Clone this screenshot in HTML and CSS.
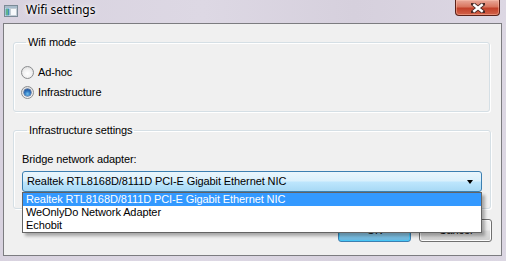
FILE: index.html
```html
<!DOCTYPE html>
<html>
<head>
<meta charset="utf-8">
<link rel="stylesheet" href="styles.css">
</head>
<body>
<div class="window">
  <div class="titlebar">
    <svg class="app-icon" width="14" height="12" viewBox="0 0 14 12">
      <rect x="0.5" y="0.5" width="13" height="11" fill="#e9eef2" stroke="#7b8a96"/>
      <rect x="1" y="1" width="12" height="2" fill="#a9bccb"/>
      <rect x="1.5" y="3.5" width="4" height="7" fill="#3f8fb8"/>
      <rect x="2" y="4" width="2" height="6" fill="#5fb48c"/>
      <rect x="6.5" y="3.5" width="6" height="7" fill="#f7f9fb" stroke="#c3cdd5"/>
    </svg>
    <span class="title">Wifi settings</span>
    <div class="close-btn">
      <svg width="14" height="10" viewBox="0 0 14 10">
        <path d="M2 1 L12 9 M12 1 L2 9" stroke="#4a2a26" stroke-width="4.2" stroke-linecap="square"/>
        <path d="M2.3 1.3 L11.7 8.7 M11.7 1.3 L2.3 8.7" stroke="#ffffff" stroke-width="2.4"/>
      </svg>
    </div>
  </div>
  <div class="client">
    <fieldset class="group group-mode">
      <legend>Wifi mode</legend>
      <div class="radio-row"><span class="radio"></span><span>Ad-hoc</span></div>
      <div class="radio-row"><span class="radio checked"></span><span>Infrastructure</span></div>
    </fieldset>
    <fieldset class="group group-infra">
      <legend>Infrastructure settings</legend>
      <div class="label">Bridge network adapter:</div>
      <div class="combo-wrap">
        <div class="combo">
          <span class="combo-text">Realtek RTL8168D/8111D PCI-E Gigabit Ethernet NIC</span>
          <span class="arrow"></span>
        </div>
        <div class="dropdown">
          <div class="item selected">Realtek RTL8168D/8111D PCI-E Gigabit Ethernet NIC</div>
          <div class="item">WeOnlyDo Network Adapter</div>
          <div class="item">Echobit</div>
        </div>
      </div>
    </fieldset>
    <div class="buttons">
      <div class="btn btn-default">OK</div>
      <div class="btn">Cancel</div>
    </div>
  </div>
</div>
</body>
</html>
```
FILE: styles.css
```css
html, body {
  margin: 0;
  padding: 0;
}
body {
  width: 506px;
  height: 261px;
  overflow: hidden;
  background: linear-gradient(90deg, #d8d2df 0%, #ddd8e4 40%, #d6d0dd 70%, #dcd7e3 100%);
  font-family: "Liberation Sans", Arial, sans-serif;
  font-size: 11px;
  letter-spacing: -0.1px;
  color: #000;
}
.window {
  display: flex;
  flex-direction: column;
  height: 261px;
}
.titlebar {
  height: 23px;
  display: flex;
  align-items: flex-start;
  flex-shrink: 0;
}
.app-icon {
  margin: 5px 0 0 4px;
}
.title {
  font-family: "Noto Sans", "Open Sans", sans-serif;
  font-size: 12px;
  letter-spacing: 0;
  line-height: 16px;
  margin: 2px 0 0 8px;
  color: #000;
  text-shadow: 0 0 6px #fff, 0 0 3px #fff;
}
.close-btn {
  margin-left: auto;
  margin-right: 6px;
  width: 43px;
  height: 15px;
  border: 1px solid #5a2118;
  border-top: none;
  border-radius: 0 0 4px 4px;
  background: linear-gradient(#e9a99a 0%, #d9765f 45%, #c2412a 55%, #d2634a 100%);
  box-shadow: inset 0 0 0 1px rgba(255, 200, 180, 0.45);
  display: flex;
  align-items: center;
  justify-content: center;
}
.client {
  flex: 1;
  margin: 0 4px 5px 3px;
  border: 1px solid #7c7c80;
  background: #f0f0f0;
  display: flex;
  flex-direction: column;
}
.group {
  margin: 0;
  border: 1px solid #d5dfe5;
  border-radius: 3px;
  box-shadow: inset 1px 1px 0 #fff, 1px 1px 0 #fff;
  padding: 0 8px;
  min-width: 0;
}
.group legend {
  padding: 0 2px;
  margin-left: 5px;
  line-height: 13px;
  height: 13px;
}
.group-mode {
  margin: 12px 11px 0 9px;
  padding-top: 13px;
  padding-bottom: 9px;
  padding-left: 7px;
}
.group-infra {
  margin: 12px 10px 0 9px;
  padding-top: 16px;
  padding-bottom: 16px;
}
.radio-row {
  display: flex;
  align-items: center;
  height: 20px;
  gap: 4px;
}
.radio {
  width: 11px;
  height: 11px;
  border: 1px solid #8b8d8f;
  border-radius: 50%;
  background: radial-gradient(circle at 50% 60%, #ffffff 0%, #f2f2f2 45%, #d4d4d4 100%);
  display: flex;
  align-items: center;
  justify-content: center;
  flex-shrink: 0;
}
.radio.checked::after {
  content: "";
  width: 7px;
  height: 7px;
  border-radius: 50%;
  background: radial-gradient(circle at 50% 70%, #74c3ec 0%, #2e76c0 45%, #163f86 100%);
  box-shadow: 0 0 0 0.5px #1b3d74;
}
.label {
  line-height: 13px;
  height: 13px;
}
.combo-wrap {
  position: relative;
  margin-top: 5px;
}
.combo {
  height: 19px;
  border: 1px solid #3c7fb1;
  border-radius: 3px;
  background: linear-gradient(#eaf6fd 0%, #d9f0fc 48%, #bee6fd 52%, #a7d9f5 100%);
  display: flex;
  align-items: center;
  padding: 0 6px 0 4px;
}
.combo-text {
  flex: 1;
  line-height: 13px;
}
.arrow {
  width: 0;
  height: 0;
  border-left: 3.5px solid transparent;
  border-right: 3.5px solid transparent;
  border-top: 4px solid #000;
  margin-right: 2px;
}
.dropdown {
  position: absolute;
  left: 0;
  top: 21px;
  width: 458px;
  border: 1px solid #646464;
  background: #fff;
  box-shadow: 3px 3px 3px rgba(0, 0, 0, 0.3);
  z-index: 5;
}
.item {
  height: 13px;
  line-height: 13px;
  padding-left: 3px;
}
.item.selected {
  background: #3399ff;
  color: #fff;
}
.buttons {
  display: flex;
  justify-content: flex-end;
  gap: 8px;
  margin: 10px 9px 0 0;
}
.btn {
  width: 71px;
  height: 21px;
  border: 1px solid #707070;
  border-radius: 3px;
  background: linear-gradient(#f2f2f2 0%, #ebebeb 48%, #dddddd 52%, #cfcfcf 100%);
  box-shadow: inset 0 0 0 1px #fcfcfc;
  display: flex;
  align-items: center;
  justify-content: center;
  line-height: 13px;
}
.btn-default {
  border-color: #3c7fb1;
  background: linear-gradient(#e5f4fc 0%, #c4e5f6 48%, #98d1ef 52%, #68b3db 100%);
  box-shadow: inset 0 0 0 1px #48c6f5;
}
```
